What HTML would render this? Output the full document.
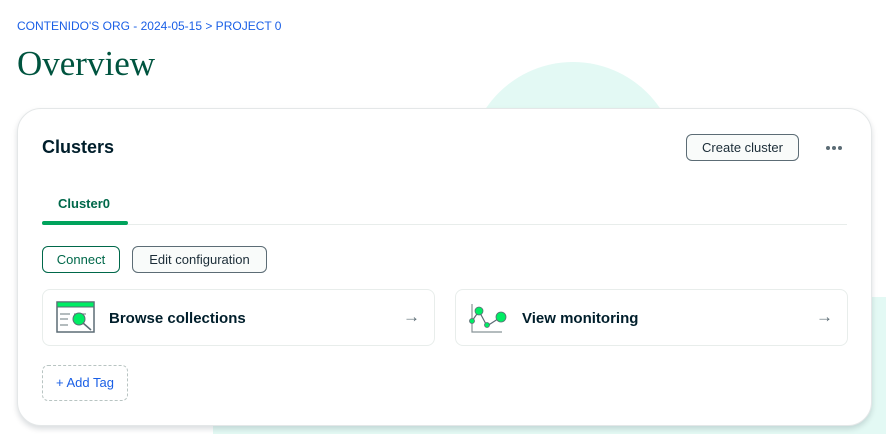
<!DOCTYPE html>
<html><head><style>
body{margin:0;width:886px;height:434px;background:#fff;position:relative;overflow:hidden;font-family:"Liberation Sans",sans-serif;}
.circ{position:absolute;left:468px;top:62px;width:210px;height:210px;border-radius:50%;background:#e3f9f4;}
.rect{position:absolute;left:213px;top:297px;width:673px;height:137px;background:#e3f9f4;}
.bc{position:absolute;left:17px;top:19px;font-size:12px;color:#1a5fe6;}
h1{position:absolute;left:17px;top:44px;margin:0;font-family:"Liberation Serif",serif;font-weight:normal;font-size:35px;color:#00543f;}
.card{position:absolute;left:17px;top:108px;width:853px;height:316px;background:#fff;border:1px solid #e4e7e8;border-radius:24px;box-shadow:0 3px 6px rgba(0,30,43,.15);}
.t{position:absolute;left:24px;top:28px;font-size:18px;font-weight:bold;color:#001e2b;}
.btn{position:absolute;border:1px solid #5c6c75;border-radius:6px;background:#f9fbfa;font-size:13px;color:#1c2d38;box-sizing:border-box;text-align:center;}
.dot{position:absolute;top:37px;width:4px;height:4px;border-radius:50%;background:#5c6c75;}
.tab{position:absolute;left:40px;top:87px;font-size:13px;font-weight:bold;color:#00684a;}
.ul{position:absolute;left:24px;top:112px;width:86px;height:4px;border-radius:2px;background:#00a35c;}
.line{position:absolute;left:24px;top:115px;width:805px;height:1px;background:#e8edeb;}
.tile{position:absolute;top:180px;width:393px;height:57px;border:1px solid #e8edeb;border-radius:8px;box-sizing:border-box;}
.tile b{position:absolute;left:66px;top:20px;font-size:15px;color:#001e2b;}
.tile .ar{position:absolute;right:14px;top:17px;color:#5c6c75;font-size:17px;font-weight:bold}
.tag{position:absolute;left:24px;top:256px;width:86px;height:36px;border:1px dashed #b8c4c2;border-radius:6px;box-sizing:border-box;font-size:13px;color:#1a5fe6;text-align:center;line-height:34px;}
</style></head><body>
<div class="circ"></div><div class="rect"></div>
<div class="bc">CONTENIDO'S ORG - 2024-05-15 &gt; PROJECT 0</div>
<h1>Overview</h1>
<div class="card">
<div class="t">Clusters</div>
<div class="btn" style="left:668px;top:25px;width:113px;height:27px;line-height:25px">Create cluster</div>
<div class="dot" style="left:808px"></div><div class="dot" style="left:814px"></div><div class="dot" style="left:820px"></div>
<div class="tab">Cluster0</div>
<div class="line"></div><div class="ul"></div>
<div class="btn" style="left:24px;top:137px;width:78px;height:27px;line-height:25px;border-color:#00684a;color:#00684a;background:#fff">Connect</div>
<div class="btn" style="left:114px;top:137px;width:135px;height:27px;line-height:25px">Edit configuration</div>
<div class="tile" style="left:24px">
<svg style="position:absolute;left:13px;top:11px" width="40" height="34" viewBox="0 0 40 34"><rect x="1" y="1" width="37" height="30" fill="#fff" stroke="#5c6c75" stroke-width="1.5"/><rect x="1" y="1" width="37" height="5" fill="#00ed64" stroke="#5c6c75" stroke-width="1"/><path d="M4 13h10M4 18h8M4 24h8M18 13h12" stroke="#889397" stroke-width="1.2"/><circle cx="23" cy="18" r="6" fill="#00ed64" stroke="#5c6c75"/><path d="M27 22l8 7" stroke="#5c6c75" stroke-width="1.5"/></svg>
<b>Browse collections</b><span class="ar">→</span></div>
<div class="tile" style="left:437px">
<svg style="position:absolute;left:13px;top:12px" width="42" height="32" viewBox="0 0 42 32"><path d="M3 2v28h30" stroke="#889397" stroke-width="1.2" fill="none"/><path d="M3 19l7-10l8 15l14-9" stroke="#5c6c75" stroke-width="1.2" fill="none"/><circle cx="3" cy="19" r="2.5" fill="#00ed64" stroke="#5c6c75" stroke-width=".8"/><circle cx="10" cy="9" r="4" fill="#00ed64" stroke="#5c6c75" stroke-width=".8"/><circle cx="18" cy="23" r="2.5" fill="#00ed64" stroke="#5c6c75" stroke-width=".8"/><circle cx="32" cy="15" r="5" fill="#00ed64" stroke="#5c6c75" stroke-width=".8"/></svg>
<b>View monitoring</b><span class="ar">→</span></div>
<div class="tag">+ Add Tag</div>
</div>
</body></html>
